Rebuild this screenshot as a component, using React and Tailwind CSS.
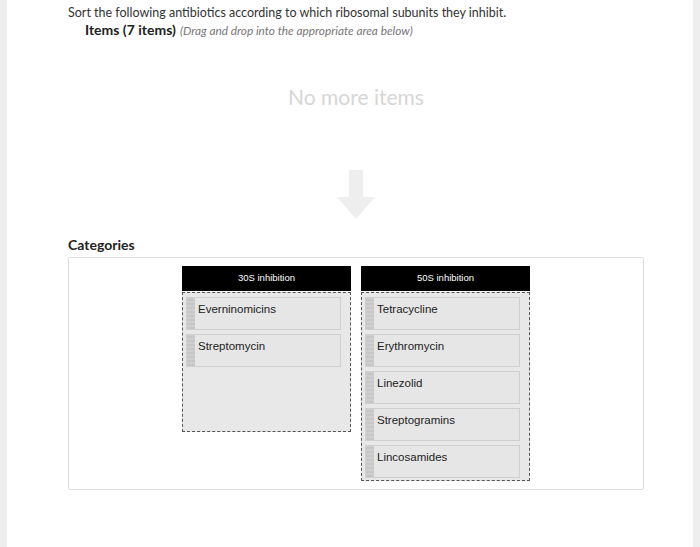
import React from "react";

const stripe = {
  backgroundImage:
    "repeating-linear-gradient(0deg, #c6c6c6 0px, #c6c6c6 2px, #cecece 2px, #cecece 4px)",
};

function Item({ label }) {
  return (
    <div className="flex h-[33px] border border-[#cfcfcf] bg-[#e6e6e6]">
      <div className="w-[8px] bg-[#c9c9c9]" style={stripe} />
      <div className="pl-[3px] pt-[4px] text-[11.5px] text-[#222] leading-[14px] font-['Liberation_Sans',Arial,sans-serif]">
        {label}
      </div>
    </div>
  );
}

function Column({ title, items, height }) {
  return (
    <div className="w-[169px] flex flex-col">
      <div className="h-[25px] bg-black text-white text-[9.5px] flex items-center justify-center font-['Liberation_Sans',Arial,sans-serif]">
        {title}
      </div>
      <div
        className={`mt-[1px] border border-dashed border-[#555] bg-[#e8e8e8] pl-[3px] pr-[9px] pt-[4px] flex flex-col gap-[4px] ${height}`}
      >
        {items.map((it) => (
          <Item key={it} label={it} />
        ))}
      </div>
    </div>
  );
}

export default function App() {
  return (
    <div className="w-[700px] h-[547px] bg-[#eeeeee] flex px-[7px] font-['Lato','Noto_Sans',sans-serif]">
      <div className="flex-1 bg-white pl-[61px] pt-[5px]">
        <div className="text-[12.5px] text-[#333] leading-[16px]">
          Sort the following antibiotics according to which ribosomal subunits they inhibit.
        </div>
        <div className="pl-[17px] leading-[16px]">
          <span className="text-[14px] font-bold text-[#222]">Items (7 items)</span>{" "}
          <span className="text-[11.8px] italic text-[#777]">(Drag and drop into the appropriate area below)</span>
        </div>
        <div className="w-[576px] flex flex-col items-center">
          <div className="mt-[46px] text-[21px] leading-[24px] text-[#d6d6d6]">No more items</div>
          <svg className="mt-[61px]" width="40" height="50" viewBox="0 0 40 50">
            <path d="M13 0 H27 V27 H39 L20 49 L1 27 H13 Z" fill="#eeeeee" />
          </svg>
        </div>
        <div className="mt-[16px] text-[14px] font-bold text-[#222] leading-[18px]">Categories</div>
        <div className="mt-[3px] w-[576px] h-[233px] border border-[#dddddd] rounded-[2px] pt-[8px] flex justify-center gap-[10px]">
          <div className="self-start">
            <Column title="30S inhibition" items={["Everninomicins", "Streptomycin"]} height="h-[140px]" />
          </div>
          <div className="self-start">
            <Column
              title="50S inhibition"
              items={["Tetracycline", "Erythromycin", "Linezolid", "Streptogramins", "Lincosamides"]}
              height="h-[189px]"
            />
          </div>
        </div>
      </div>
    </div>
  );
}
